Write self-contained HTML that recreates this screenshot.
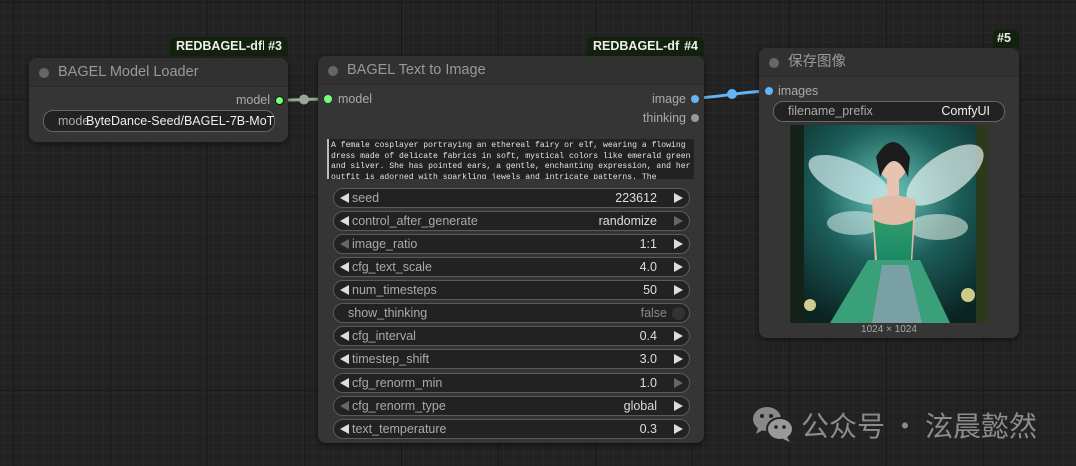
<!DOCTYPE html>
<html><head><meta charset="utf-8"><style>
*{margin:0;padding:0;box-sizing:border-box}
body{width:1076px;height:466px;overflow:hidden;background:#222;font-family:"Liberation Sans","Noto Sans CJK SC",sans-serif;position:relative;
background-image:linear-gradient(#1a1a1a 1px,transparent 1px),linear-gradient(90deg,#1a1a1a 1px,transparent 1px),linear-gradient(#282828 1px,transparent 1px),linear-gradient(90deg,#282828 1px,transparent 1px);
background-size:97px 97px,97px 97px,10px 10px,10px 10px;background-position:0 2px,13px 0,0 2px,3px 0}
.abs{position:absolute}
.node{position:absolute;background:#353535;border-radius:8px;box-shadow:0 2px 6px rgba(0,0,0,.5)}
.title{position:absolute;left:0;right:0;top:0;height:29px;background:#313131;border-radius:8px 8px 0 0;border-bottom:1px solid #2a2a2a;color:#999;font-size:14.5px;line-height:29px;padding-left:29px;white-space:nowrap}
.title:before{content:"";position:absolute;left:10px;top:10px;width:10px;height:10px;border-radius:50%;background:#666}
.badge{position:absolute;background:#13220f;color:#eee;font-weight:bold;font-size:12.5px;height:19px;line-height:19px;padding:0 6px;border-radius:6px 6px 0 0;white-space:nowrap;overflow:hidden}
.lbl{position:absolute;font-size:12.5px;color:#aaa;white-space:nowrap}
.dot{position:absolute;width:8px;height:8px;border-radius:50%}
.w{position:absolute;height:20px;background:#222;border:1px solid #5a5a5a;border-radius:10px;font-size:12.5px;color:#aaa;line-height:18px;white-space:nowrap}
.w .l{position:absolute;left:18px}
.w .v{position:absolute;right:32px;color:#ddd}
.al,.ar{position:absolute;top:4px;width:0;height:0;border-top:5px solid transparent;border-bottom:5px solid transparent}
.al{left:6px;border-right:9px solid #ddd}
.ar{right:6px;border-left:9px solid #ddd}
.al.d{border-right-color:#666}.ar.d{border-left-color:#666}
</style></head><body>

<svg class="abs" style="left:0;top:0" width="1076" height="466">
<path d="M284 100 C300 100,310 99,328 99" stroke="#9aa89a" stroke-width="3" fill="none"/>
<circle cx="304" cy="99.5" r="5" fill="#9aa89a"/>
<path d="M697 98 C720 97,740 92,768 91" stroke="#64b5f6" stroke-width="3" fill="none"/>
<circle cx="732" cy="94" r="5" fill="#64b5f6"/>
</svg>

<div class="badge" style="left:170px;top:37px;width:118px">REDBAGEL-dfloa<span class="abs" style="right:0;top:0;background:#13220f;padding:0 6px 0 4px">#3</span></div>
<div class="node" style="left:29px;top:58px;width:259px;height:84px">
<div class="title">BAGEL Model Loader</div>
<div class="lbl" style="right:18px;top:35px">model</div>
<div class="dot" style="right:4px;top:38px;background:#7f7;border:1px solid #111;width:9px;height:9px"></div>
<div class="w" style="left:14px;top:52px;width:232px;height:22px;border-color:#666;line-height:20px"><span class="l" style="left:14px">mode</span><span class="v" style="right:auto;left:42px;color:#eee">ByteDance-Seed/BAGEL-7B-MoT</span></div>
</div>

<div class="badge" style="left:587px;top:37px;width:117px">REDBAGEL-dfloa<span class="abs" style="right:0;top:0;background:#13220f;padding:0 6px 0 4px">#4</span></div>
<div class="node" style="left:318px;top:56px;width:386px;height:387px">
<div class="title">BAGEL Text to Image</div>
<div class="dot" style="left:6px;top:39px;background:#7f7"></div>
<div class="lbl" style="left:20px;top:36px">model</div>
<div class="lbl" style="right:18px;top:36px">image</div>
<div class="dot" style="right:5px;top:39px;background:#64b5f6"></div>
<div class="lbl" style="right:18px;top:55px">thinking</div>
<div class="dot" style="right:5px;top:58px;background:#999"></div>
<div class="abs" style="left:9px;top:83px;width:367px;height:40px;background:#222;border-left:2px solid #bbb;overflow:hidden;font-family:'Liberation Mono',monospace;font-size:8.1px;line-height:10.5px;color:#e4e4e4;padding:2px 0 0 2px;white-space:pre">A female cosplayer portraying an ethereal fairy or elf, wearing a flowing
dress made of delicate fabrics in soft, mystical colors like emerald green
and silver. She has pointed ears, a gentle, enchanting expression, and her
outfit is adorned with sparkling jewels and intricate patterns. The</div>
<div class="w" style="left:15px;top:132px;width:357px"><span class="al"></span><span class="l">seed</span><span class="v">223612</span><span class="ar"></span></div>
<div class="w" style="left:15px;top:155px;width:357px"><span class="al"></span><span class="l">control_after_generate</span><span class="v">randomize</span><span class="ar d"></span></div>
<div class="w" style="left:15px;top:178px;width:357px"><span class="al d"></span><span class="l">image_ratio</span><span class="v">1:1</span><span class="ar"></span></div>
<div class="w" style="left:15px;top:201px;width:357px"><span class="al"></span><span class="l">cfg_text_scale</span><span class="v">4.0</span><span class="ar"></span></div>
<div class="w" style="left:15px;top:224px;width:357px"><span class="al"></span><span class="l">num_timesteps</span><span class="v">50</span><span class="ar"></span></div>
<div class="w" style="left:15px;top:247px;width:357px"><span class="l" style="left:14px">show_thinking</span><span class="v" style="right:22px;color:#888">false</span><span class="abs" style="right:4px;top:3px;width:13px;height:13px;border-radius:50%;background:#333"></span></div>
<div class="w" style="left:15px;top:270px;width:357px"><span class="al"></span><span class="l">cfg_interval</span><span class="v">0.4</span><span class="ar"></span></div>
<div class="w" style="left:15px;top:293px;width:357px"><span class="al"></span><span class="l">timestep_shift</span><span class="v">3.0</span><span class="ar"></span></div>
<div class="w" style="left:15px;top:317px;width:357px"><span class="al"></span><span class="l">cfg_renorm_min</span><span class="v">1.0</span><span class="ar d"></span></div>
<div class="w" style="left:15px;top:340px;width:357px"><span class="al d"></span><span class="l">cfg_renorm_type</span><span class="v">global</span><span class="ar"></span></div>
<div class="w" style="left:15px;top:363px;width:357px"><span class="al"></span><span class="l">text_temperature</span><span class="v">0.3</span><span class="ar"></span></div>
</div>

<div class="badge" style="left:993px;top:29px;width:26px;padding:0 4px">#5</div>
<div class="node" style="left:759px;top:48px;width:260px;height:290px">
<div class="title">保存图像</div>
<div class="dot" style="left:6px;top:39px;background:#64b5f6"></div>
<div class="lbl" style="left:19px;top:36px">images</div>
<div class="w" style="left:14px;top:53px;width:232px;height:21px;border-color:#666"><span class="l" style="left:14px">filename_prefix</span><span class="v" style="right:14px;color:#eee">ComfyUI</span></div>
<svg class="abs" style="left:31px;top:77px" width="198" height="198" viewBox="0 0 198 198">
<defs>
<radialGradient id="bg" cx="50%" cy="35%" r="70%"><stop offset="0" stop-color="#6cc8bd"/><stop offset=".5" stop-color="#1c5e5a"/><stop offset="1" stop-color="#0b2422"/></radialGradient>
<linearGradient id="dr" x1="0" y1="0" x2="0" y2="1"><stop offset="0" stop-color="#2f9a6a"/><stop offset="1" stop-color="#1a8a66"/></linearGradient>
</defs>
<rect width="198" height="198" fill="url(#bg)"/>
<rect x="0" y="0" width="14" height="198" fill="#14231a"/>
<rect x="186" y="0" width="12" height="198" fill="#2a3a1a"/>
<ellipse cx="60" cy="55" rx="45" ry="18" fill="#d6ecef" opacity=".7" transform="rotate(25 60 55)"/>
<ellipse cx="155" cy="50" rx="45" ry="20" fill="#e6f2f0" opacity=".7" transform="rotate(-35 155 50)"/>
<ellipse cx="65" cy="98" rx="28" ry="12" fill="#dcefee" opacity=".55"/>
<ellipse cx="148" cy="102" rx="30" ry="13" fill="#eaf2e8" opacity=".55"/>
<ellipse cx="103" cy="38" rx="14" ry="18" fill="#e8c3b0"/>
<path d="M86 32 Q103 2 120 32 L118 52 Q104 20 90 52Z" fill="#1c1c1c"/>
<rect x="97" y="52" width="12" height="20" fill="#e8c3b0"/>
<path d="M82 75 Q103 66 126 75 L122 140 L85 140Z" fill="#e2bba6"/>
<path d="M84 95 Q103 105 123 95 L121 135 L87 135Z" fill="url(#dr)"/>
<path d="M78 135 L130 135 L160 198 L40 198Z" fill="#3aa07a"/>
<path d="M92 140 L118 140 L132 198 L82 198Z" fill="#8aa0b0" opacity=".8"/>
<circle cx="20" cy="180" r="6" fill="#fff5b0" opacity=".8"/>
<circle cx="178" cy="170" r="7" fill="#fff2a0" opacity=".8"/>
</svg>
<div class="abs" style="left:0;right:0;top:276px;text-align:center;font-size:10px;color:#aaa">1024 × 1024</div>
</div>

<svg class="abs" style="left:752px;top:406px" width="42" height="36" viewBox="0 0 42 36">
<ellipse cx="15" cy="13" rx="14" ry="12" fill="#888"/>
<path d="M6 22 L4 28 L11 24Z" fill="#888"/>
<ellipse cx="28" cy="23" rx="13" ry="11" fill="#999" stroke="#222" stroke-width="2"/>
<path d="M35 31 L38 36 L31 33Z" fill="#999"/>
<circle cx="10" cy="10" r="2" fill="#222"/><circle cx="19" cy="10" r="2" fill="#222"/>
<circle cx="24" cy="21" r="1.8" fill="#222"/><circle cx="32" cy="21" r="1.8" fill="#222"/>
</svg>
<div class="abs" style="left:801px;top:405px;font-size:28px;color:#8c8c8c;font-family:'Noto Sans CJK SC',sans-serif;white-space:nowrap">公众号<span style="margin:0 6px">·</span>泫晨懿然</div>
</body></html>
